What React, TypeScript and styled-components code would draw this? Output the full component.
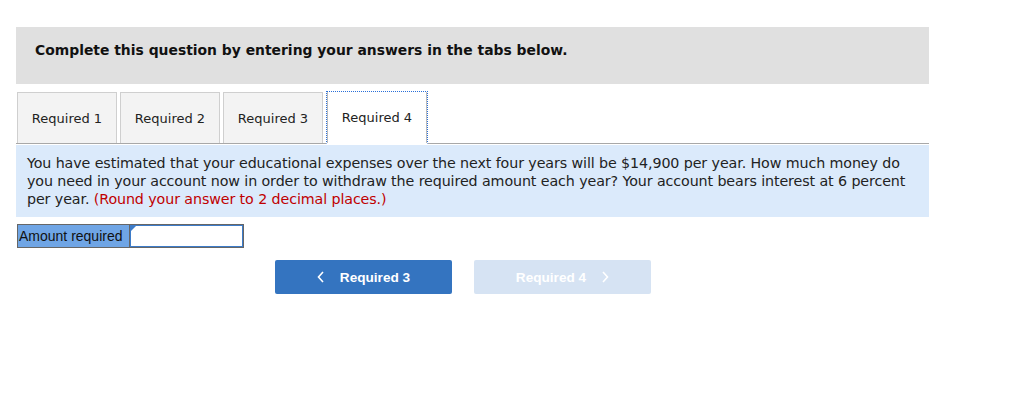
import styled, { createGlobalStyle } from 'styled-components';

const GlobalStyle = createGlobalStyle`
  body {
    margin: 0;
    background: #fff;
    font-family: "DejaVu Sans", Verdana, sans-serif;
  }
`;

const Page = styled.div`
  width: 913px;
  padding: 27px 0 0 16px;
`;

const Header = styled.div`
  height: 57px;
  box-sizing: border-box;
  background: #e0e0e0;
  padding: 15px 0 0 19px;
  font-family: "DejaVu Sans", Verdana, sans-serif;
  font-weight: bold;
  font-size: 13.9px;
  color: #111;
`;

const TabBar = styled.div`
  display: flex;
  margin-top: 6px;
  padding-left: 1px;
  border-bottom: 1px solid #a8a8a8;
  height: 53px;
  align-items: flex-end;
`;

const Tab = styled.div<{ active?: boolean }>`
  width: ${({ active }) => (active ? '102px' : '100px')};
  margin-right: 3px;
  display: flex;
  align-items: center;
  justify-content: center;
  font-size: 13px;
  color: #222;
  background: ${({ active }) => (active ? '#fff' : '#f3f3f3')};
  border: ${({ active }) => (active ? '1px dotted #2a6fd8' : '1px solid #cfcfcf')};
  border-bottom: ${({ active }) => (active ? '1px solid #fff' : 'none')};
  box-shadow: ${({ active }) =>
    active ? 'inset 1px 0 0 #bbb, inset -1px 0 0 #bbb' : 'none'};
  margin-bottom: ${({ active }) => (active ? '-1px' : '0')};
  height: ${({ active }) => (active ? '53px' : '51px')};
  box-sizing: border-box;
`;

const Info = styled.div`
  margin-top: 1px;
  background: #dbeafb;
  padding: 9px 20px 9px 11px;
  font-size: 14.25px;
  line-height: 18px;
  color: #222;
  letter-spacing: -0.1px;
`;

const Hint = styled.span`
  color: #c00000;
`;

const AnswerRow = styled.div`
  display: flex;
  margin-top: 7px;
  margin-left: 1px;
  height: 24px;
  width: 227px;
  border: 1px solid #666;
  box-sizing: border-box;
`;

const AnswerLabel = styled.div`
  width: 112px;
  background: #6fa5e5;
  border-right: 1px solid #666;
  font-family: "Liberation Sans", Arial, sans-serif;
  font-size: 14px;
  color: #111;
  display: flex;
  align-items: center;
  padding-left: 1px;
  box-sizing: border-box;
  white-space: nowrap;
`;

const AnswerInput = styled.div`
  position: relative;
  flex: 1;
  background: #fff;
  border: 1px solid #3d7cc9;
  &::before {
    content: '';
    position: absolute;
    left: 0;
    top: 0;
    border-top: 5px solid #3d7cc9;
    border-right: 5px solid transparent;
  }
`;

const Nav = styled.div`
  display: flex;
  gap: 22px;
  margin-top: 12px;
  margin-left: 259px;
`;

const NavButton = styled.div<{ disabled?: boolean }>`
  width: 177px;
  height: 34px;
  border-radius: 2px;
  background: ${({ disabled }) => (disabled ? '#d6e3f3' : '#3474c0')};
  color: #fff;
  display: flex;
  align-items: center;
  justify-content: center;
  gap: 15px;
  font-family: "Liberation Sans", Arial, sans-serif;
  font-weight: bold;
  font-size: 13.6px;
`;

const Chevron = ({ dir }: { dir: 'left' | 'right' }) => (
  <svg width="8" height="12" viewBox="0 0 8 12">
    <path
      d={dir === 'left' ? 'M6 1 L1.5 6 L6 11' : 'M2 1 L6.5 6 L2 11'}
      fill="none"
      stroke="#fff"
      strokeWidth="1.6"
    />
  </svg>
);

export default function App() {
  return (
    <>
      <GlobalStyle />
      <Page>
        <Header>Complete this question by entering your answers in the tabs below.</Header>
        <TabBar>
          <Tab>Required 1</Tab>
          <Tab>Required 2</Tab>
          <Tab>Required 3</Tab>
          <Tab active>Required 4</Tab>
        </TabBar>
        <Info>
          You have estimated that your educational expenses over the next four years will be
          $14,900 per year. How much money do you need in your account now in order to withdraw
          the required amount each year? Your account bears interest at 6 percent per year.{' '}
          <Hint>(Round your answer to 2 decimal places.)</Hint>
        </Info>
        <AnswerRow>
          <AnswerLabel>Amount required</AnswerLabel>
          <AnswerInput />
        </AnswerRow>
        <Nav>
          <NavButton>
            <Chevron dir="left" />
            Required 3
          </NavButton>
          <NavButton disabled>
            Required 4
            <Chevron dir="right" />
          </NavButton>
        </Nav>
      </Page>
    </>
  );
}
